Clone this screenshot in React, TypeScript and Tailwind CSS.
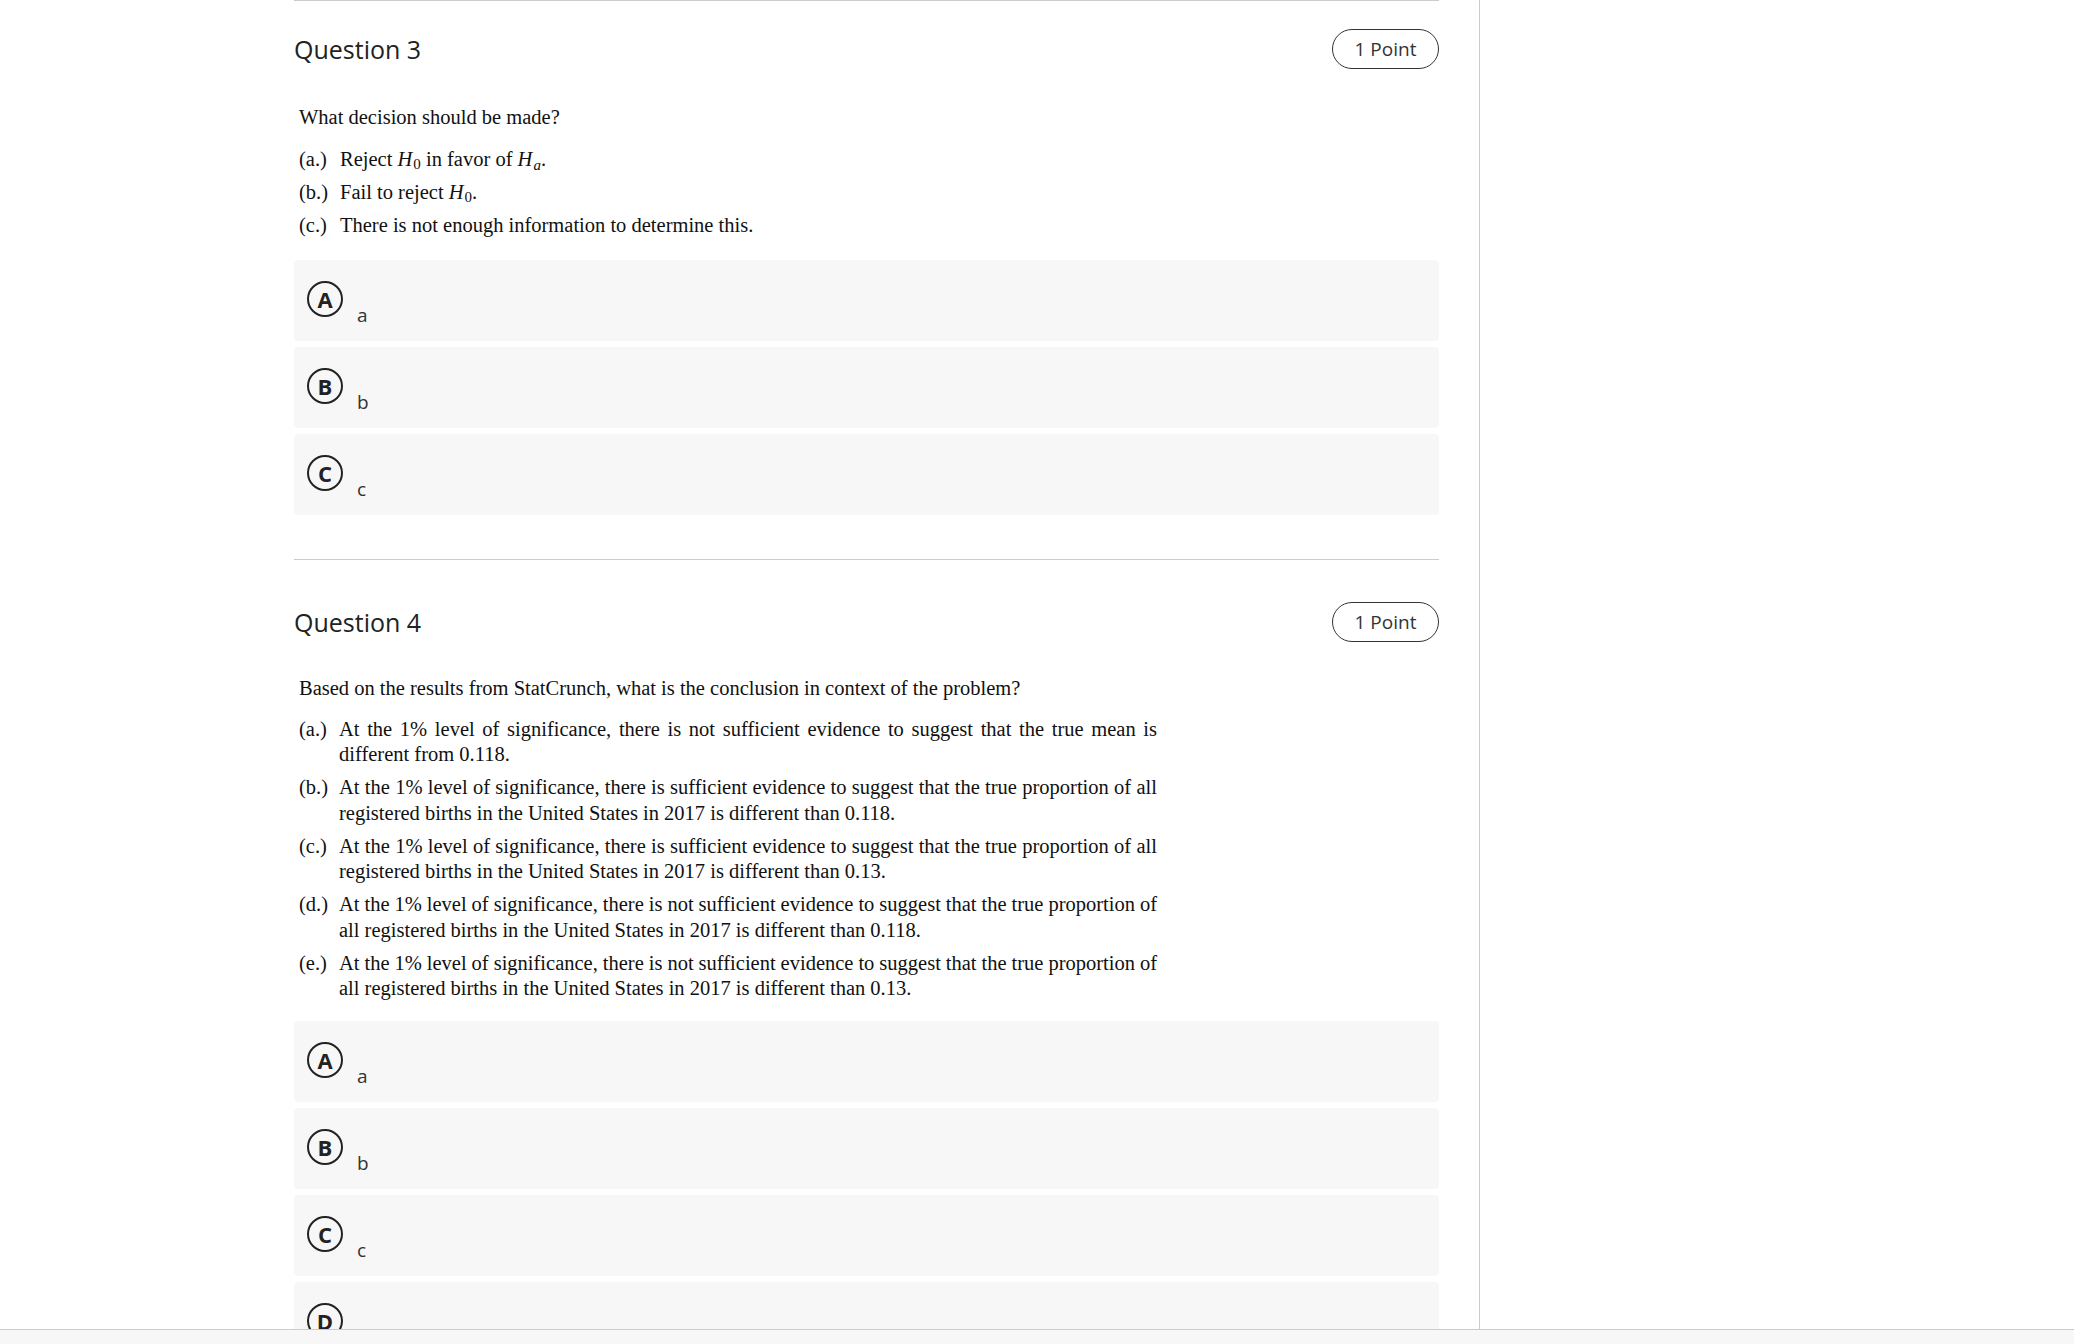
import React from "react";

const ui = { fontFamily: '"Open Sans", "Liberation Sans", sans-serif' };
const serif = { fontFamily: '"Liberation Serif", "Times New Roman", serif' };

function H0() {
  return (
    <span>
      <i>H</i>
      <sub className="relative top-[3px] ml-[1px] align-baseline text-[15px]">0</sub>
    </span>
  );
}

function Ha() {
  return (
    <span>
      <i>H</i>
      <sub className="relative top-[4px] ml-[1px] align-baseline text-[15px] italic">a</sub>
    </span>
  );
}

function PointPill() {
  return (
    <div className="flex h-[40px] w-[107px] items-center justify-center rounded-full border border-[#333] text-[19px] font-medium text-[#333]">
      1 Point
    </div>
  );
}

function QuestionHeader({ n }: { n: number }) {
  return (
    <div className="flex h-[40px] items-center justify-between">
      <h2 className="text-[25px] font-medium leading-[32px] text-[#222]">Question {n}</h2>
      <PointPill />
    </div>
  );
}

function Choice({ letter, label }: { letter: string; label: string }) {
  return (
    <div className="flex h-[81px] shrink-0 items-start gap-[14px] rounded-[4px] bg-[#f7f7f7] px-[13px] pt-[21px]">
      <div className="flex h-[36px] w-[36px] shrink-0 items-center justify-center rounded-full border-2 border-[#222] text-[22px] font-bold leading-none text-[#222]">
        {letter}
      </div>
      {label && <div className="mt-[22px] text-[19px] leading-[24px] text-[#333]">{label}</div>}
    </div>
  );
}

function ShortItem({ tag, children }: { tag: string; children: React.ReactNode }) {
  return (
    <div className="flex">
      <span className="w-[41px] shrink-0">{tag}</span>
      <span>{children}</span>
    </div>
  );
}

function LongItem({ tag, first, second }: { tag: string; first: string; second: string }) {
  return (
    <div className="flex">
      <span className="w-[40px] shrink-0">{tag}</span>
      <div className="w-[818px]">
        <div className="text-justify [text-align-last:justify] [word-spacing:-2px]">{first}</div>
        <div>{second}</div>
      </div>
    </div>
  );
}

const q4Items = [
  {
    tag: "(a.)",
    first: "At the 1% level of significance, there is not sufficient evidence to suggest that the true mean is",
    second: "different from 0.118.",
  },
  {
    tag: "(b.)",
    first: "At the 1% level of significance, there is sufficient evidence to suggest that the true proportion of all",
    second: "registered births in the United States in 2017 is different than 0.118.",
  },
  {
    tag: "(c.)",
    first: "At the 1% level of significance, there is sufficient evidence to suggest that the true proportion of all",
    second: "registered births in the United States in 2017 is different than 0.13.",
  },
  {
    tag: "(d.)",
    first: "At the 1% level of significance, there is not sufficient evidence to suggest that the true proportion of",
    second: "all registered births in the United States in 2017 is different than 0.118.",
  },
  {
    tag: "(e.)",
    first: "At the 1% level of significance, there is not sufficient evidence to suggest that the true proportion of",
    second: "all registered births in the United States in 2017 is different than 0.13.",
  },
];

export default function App() {
  return (
    <div className="flex h-[1344px] flex-col overflow-hidden bg-white" style={ui}>
      <div className="flex h-[1329px] shrink-0">
        <main className="h-full w-[1480px] shrink-0 overflow-hidden border-r border-[#cccccc]">
          <div className="ml-[294px] w-[1145px]">
            {/* Question 3 */}
            <section className="border-t border-[#cccccc] pt-[28px] pb-[44px]">
              <QuestionHeader n={3} />
              <div className="mt-[32px] pl-[5px] text-[20.5px] leading-[33px] text-[#111]" style={serif}>
                <p>What decision should be made?</p>
                <div className="mt-[9px]">
                  <ShortItem tag="(a.)">
                    Reject <H0 /> in favor of <Ha />.
                  </ShortItem>
                  <ShortItem tag="(b.)">
                    Fail to reject <H0 />.
                  </ShortItem>
                  <ShortItem tag="(c.)">There is not enough information to determine this.</ShortItem>
                </div>
              </div>
              <div className="mt-[18px] flex flex-col gap-[6px]">
                <Choice letter="A" label="a" />
                <Choice letter="B" label="b" />
                <Choice letter="C" label="c" />
              </div>
            </section>

            {/* Question 4 */}
            <section className="border-t border-[#cccccc] pt-[42px]">
              <QuestionHeader n={4} />
              <div className="mt-[34px] pl-[5px] text-[20.5px] leading-[25.5px] text-[#111]" style={serif}>
                <p>Based on the results from StatCrunch, what is the conclusion in context of the problem?</p>
                <div className="mt-[15px] flex flex-col gap-[7.5px]">
                  {q4Items.map((it) => (
                    <LongItem key={it.tag} tag={it.tag} first={it.first} second={it.second} />
                  ))}
                </div>
              </div>
              <div className="mt-[19px] flex flex-col gap-[6px]">
                <Choice letter="A" label="a" />
                <Choice letter="B" label="b" />
                <Choice letter="C" label="c" />
                <Choice letter="D" label="" />
              </div>
            </section>
          </div>
        </main>
        <div className="flex-1" />
      </div>
      <div className="h-[15px] shrink-0 border-t border-[#cccccc] bg-[#f7f7f7]" />
    </div>
  );
}
